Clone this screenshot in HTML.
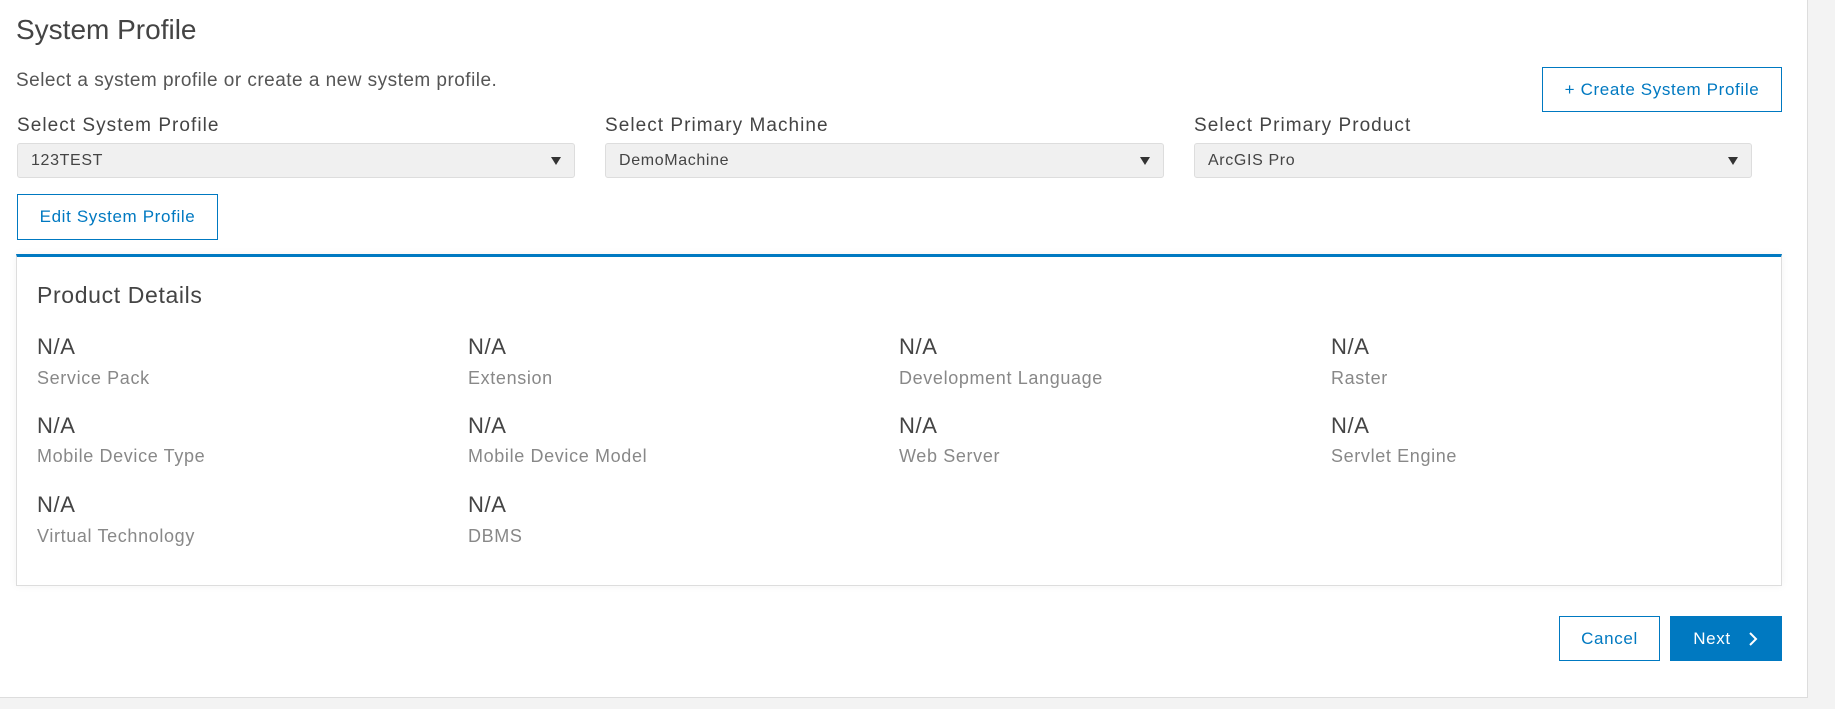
<!DOCTYPE html>
<html><head><style>
body{margin:0;width:1835px;height:709px;background:#f3f3f3;font-family:"Liberation Sans",sans-serif;position:relative;overflow:hidden;letter-spacing:.04em}
.card{position:absolute;left:0;top:0;width:1807px;height:697px;background:#fff;border-right:1px solid #ddd;border-bottom:1px solid #ddd}
.a{position:absolute;white-space:nowrap}
.sel{position:absolute;top:143px;height:35px;background:#f0f0f0;border:1px solid #ddd;border-radius:3px;box-sizing:border-box;font-size:16px;color:#444;padding:8px 13px}
.sel:after{content:"";position:absolute;right:13px;top:13px;border-left:5px solid transparent;border-right:5px solid transparent;border-top:8px solid #333}
.btn{position:absolute;border:1px solid #0079c1;color:#0079c1;box-sizing:border-box;font-size:17px;display:flex;align-items:center;justify-content:center;background:#fff}
.na{font-size:22px;color:#444}
.lb{font-size:18px;color:#888}
</style></head><body>
<div class="card"></div>
<div class="a" style="left:16px;top:14px;font-size:28px;color:#444;letter-spacing:0">System Profile</div>
<div class="a" style="left:16px;top:70px;font-size:19px;color:#555;letter-spacing:.025em">Select a system profile or create a new system profile.</div>
<div class="btn" style="left:1542px;top:67px;width:240px;height:45px">+ Create System Profile</div>
<div class="a" style="left:17px;top:115px;font-size:19px;color:#444;letter-spacing:.055em">Select System Profile</div>
<div class="a" style="left:605px;top:115px;font-size:19px;color:#444;letter-spacing:.055em">Select Primary Machine</div>
<div class="a" style="left:1194px;top:115px;font-size:19px;color:#444;letter-spacing:.055em">Select Primary Product</div>
<div class="sel" style="left:17px;width:558px">123TEST</div>
<div class="sel" style="left:605px;width:559px">DemoMachine</div>
<div class="sel" style="left:1194px;width:558px">ArcGIS Pro</div>
<div class="btn" style="left:17px;top:194px;width:201px;height:46px">Edit System Profile</div>
<div style="position:absolute;left:16px;top:254px;width:1766px;height:332px;border:1px solid #ddd;border-top:3px solid #0079c1;box-sizing:border-box;box-shadow:0 0 8px rgba(0,0,0,.05)"></div>
<div class="a" style="left:37px;top:282px;font-size:23px;color:#444">Product Details</div>
<div class="a na" style="left:37px;top:334px">N/A</div><div class="a lb" style="left:37px;top:368px">Service Pack</div>
<div class="a na" style="left:468px;top:334px">N/A</div><div class="a lb" style="left:468px;top:368px">Extension</div>
<div class="a na" style="left:899px;top:334px">N/A</div><div class="a lb" style="left:899px;top:368px">Development Language</div>
<div class="a na" style="left:1331px;top:334px">N/A</div><div class="a lb" style="left:1331px;top:368px">Raster</div>
<div class="a na" style="left:37px;top:413px">N/A</div><div class="a lb" style="left:37px;top:446px">Mobile Device Type</div>
<div class="a na" style="left:468px;top:413px">N/A</div><div class="a lb" style="left:468px;top:446px">Mobile Device Model</div>
<div class="a na" style="left:899px;top:413px">N/A</div><div class="a lb" style="left:899px;top:446px">Web Server</div>
<div class="a na" style="left:1331px;top:413px">N/A</div><div class="a lb" style="left:1331px;top:446px">Servlet Engine</div>
<div class="a na" style="left:37px;top:492px">N/A</div><div class="a lb" style="left:37px;top:526px">Virtual Technology</div>
<div class="a na" style="left:468px;top:492px">N/A</div><div class="a lb" style="left:468px;top:526px">DBMS</div>
<div class="btn" style="left:1559px;top:616px;width:101px;height:45px">Cancel</div>
<div class="btn" style="left:1670px;top:616px;width:112px;height:45px;background:#0079c1;color:#fff">Next&nbsp;&nbsp;&nbsp;<svg width="12" height="16" viewBox="0 0 12 16"><path d="M3 2l6 6-6 6" stroke="#fff" stroke-width="2" fill="none"/></svg></div>
</body></html>
